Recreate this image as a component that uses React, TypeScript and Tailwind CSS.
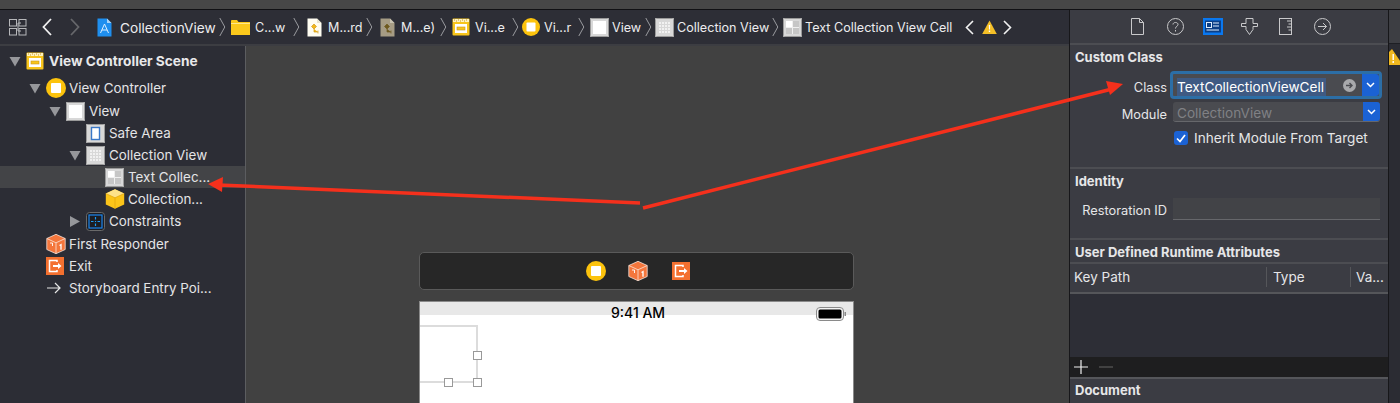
import type { ReactNode } from "react";

const font = "font-['Inter','Liberation_Sans',sans-serif]";

function SceneIcon() {
  return (
    <svg width="18" height="18" viewBox="0 0 18 18" className="shrink-0">
      <rect x="0.5" y="0.5" width="17" height="17" rx="1" fill="#f8c51c" />
      <rect x="1" y="1" width="16" height="3" fill="#fff3c0" />
      <path d="M2 2h1M4 3h1M6 2h1M8 3h1M10 2h1M12 3h1M14 2h1" stroke="#c9971a" strokeWidth="1" />
      <rect x="3" y="6" width="12" height="9" fill="#fff" />
      <rect x="5" y="9" width="8" height="3" fill="#f8c51c" stroke="#c9971a" strokeWidth="0.6" />
    </svg>
  );
}

function VCIcon({ size = 20 }: { size?: number }) {
  return (
    <svg width={size} height={size} viewBox="0 0 20 20" className="shrink-0">
      <circle cx="10" cy="10" r="10" fill="#fcc30d" />
      <rect x="5" y="5" width="10" height="10" rx="1" fill="#fff" />
    </svg>
  );
}

function BoxIcon({ children }: { children?: ReactNode }) {
  return (
    <svg width="19" height="19" viewBox="0 0 19 19" className="shrink-0">
      <rect x="0" y="0" width="19" height="19" rx="1" fill="#d8d8d8" />
      <rect x="0.5" y="0.5" width="18" height="18" rx="1" fill="none" stroke="#9a9a9a" />
      {children}
    </svg>
  );
}

const ViewIcon = () => (
  <BoxIcon>
    <rect x="3" y="3" width="13" height="13" fill="#fff" />
  </BoxIcon>
);

const SafeIcon = () => (
  <BoxIcon>
    <rect x="5.5" y="3.5" width="8" height="12" fill="#fff" stroke="#3a78c8" strokeWidth="1.4" />
  </BoxIcon>
);

const GridIcon = () => (
  <BoxIcon>
    {[4, 7, 10, 13].map((y) =>
      [4, 7, 10, 13].map((x) => <rect key={`${x}-${y}`} x={x} y={y} width="2" height="2" fill="#f1f1f1" />)
    )}
  </BoxIcon>
);

const CellIcon = () => (
  <BoxIcon>
    <rect x="3" y="3" width="13" height="13" fill="#efefef" />
    <rect x="3" y="3" width="6" height="6" fill="#fff" />
    <rect x="10" y="3" width="6" height="6" fill="#c6c6c6" />
    <rect x="3" y="10" width="6" height="6" fill="#c6c6c6" />
    <rect x="10" y="10" width="6" height="6" fill="#c6c6c6" />
  </BoxIcon>
);

function CubeIcon({ size = 20 }: { size?: number }) {
  return (
    <svg width={size} height={size} viewBox="0 0 20 20" className="shrink-0">
      <path d="M10 0.3 19.2 4.5v11L10 19.7.8 15.5v-11z" fill="#f4763c" stroke="#f6e5dc" strokeWidth="0.8" />
      <path d="M.8 4.5 10 8.8l9.2-4.3M10 8.8v10.9" stroke="#fbd9c8" strokeWidth="0.9" fill="none" />
      <path d="M13.5 11.5l1.5-.8v5" stroke="#fff" strokeWidth="1.3" fill="none" />
      <path d="M4 9h2.5v3" stroke="#fff" strokeWidth="0.9" fill="none" />
    </svg>
  );
}

function YellowCube() {
  return (
    <svg width="20" height="20" viewBox="0 0 20 20" className="shrink-0">
      <path d="M10 0.3 19.2 4.5v11L10 19.7.8 15.5v-11z" fill="#fbc41a" />
      <path d="M10 0.3 19.2 4.5 10 8.8.8 4.5z" fill="#fde28a" />
      <path d="M.8 4.5 10 8.8l9.2-4.3M10 8.8v10.9" stroke="#e0a50e" strokeWidth="0.7" fill="none" />
    </svg>
  );
}

function ExitIcon({ size = 18 }: { size?: number }) {
  return (
    <svg width={size} height={size} viewBox="0 0 18 18" className="shrink-0">
      <rect width="18" height="18" fill="#f4702f" />
      <path d="M11 5V3.5H3.5v11H11V13" stroke="#fff" strokeWidth="1.5" fill="none" />
      <path d="M7 8h5V6l3.5 3-3.5 3v-2H7z" fill="#fff" />
    </svg>
  );
}

function ConstraintsIcon() {
  return (
    <svg width="19" height="19" viewBox="0 0 19 19" className="shrink-0">
      <rect x="0.5" y="0.5" width="18" height="18" rx="3" fill="#1c1d22" stroke="#6a6a6a" />
      <rect x="3" y="3" width="13" height="13" fill="none" stroke="#1b86ee" strokeWidth="1.2" />
      <path d="M9.5 5v2.5M9.5 9v1M9.5 11.5V14M5 9.5h2.5M11.5 9.5H14" stroke="#1b9bf5" strokeWidth="1.2" />
    </svg>
  );
}

function Tri({ open = true }: { open?: boolean }) {
  return (
    <svg width="12" height="11" viewBox="0 0 12 11" className="shrink-0 ml-[1px]">
      {open ? <path d="M0.5 1h11L6 10.5z" fill="#96979b" /> : <path d="M1 0l10 5.5L1 11z" fill="#96979b" />}
    </svg>
  );
}

function Row({
  pad,
  label,
  icon,
  tri,
  bold,
  h = "h-[22px]",
  active,
}: {
  pad: string;
  label: string;
  icon: ReactNode;
  tri?: "open" | "closed";
  bold?: boolean;
  h?: string;
  active?: boolean;
}) {
  return (
    <div className={`flex items-center ${h} ${pad} ${active ? "bg-[#434447]" : ""}`}>
      <div className="w-[18px] shrink-0 flex">{tri && <Tri open={tri === "open"} />}</div>
      <div className="w-[20px] shrink-0 flex items-center">{icon}</div>
      <span className={`ml-[3px] whitespace-nowrap ${bold ? "font-bold text-[13.7px] text-[#e8e8ea]" : "text-[#e4e4e6]"}`}>{label}</span>
    </div>
  );
}

function Chevron() {
  return (
    <svg width="7" height="20" viewBox="0 0 7 20" className="shrink-0">
      <path d="M0.8 1 5.8 10 0.8 19" stroke="#9a9b9f" strokeWidth="1" fill="none" />
    </svg>
  );
}

function DocIcon({ dim }: { dim?: boolean }) {
  return (
    <svg width="15" height="19" viewBox="0 0 15 19" className="shrink-0">
      <path d="M0.5 0.5H10L14.5 5v13.5H0.5z" fill={dim ? "#a69c84" : "#fffdf2"} />
      <path d="M10 0.5V5h4.5" fill={dim ? "#c8c2b0" : "#e9e4cf"} />
      <path d="M7 6 9.5 8.5 7 11 4.5 8.5zM7 11v3h4M11 12.5v3" fill={dim ? "#6e5a1f" : "#f2b81e"} stroke={dim ? "#6e5a1f" : "#d09a18"} strokeWidth="0.7" />
    </svg>
  );
}

function Crumb({ ml, icon, label, w, gap }: { ml: string; icon: ReactNode; label: string; w: string; gap: string }) {
  return (
    <>
      <div className={`shrink-0 flex items-center ${ml}`}>{icon}</div>
      <span className={`shrink-0 whitespace-nowrap pt-[2px] text-[#ececee] ${gap} ${w}`}>{label}</span>
    </>
  );
}

function Breadcrumbs() {
  return (
    <div className={`h-[34px] flex items-center bg-[#2d2e36] text-[12.6px] ${font}`}>
      <svg width="18" height="17" viewBox="0 0 18 17" className="ml-[9px] shrink-0" fill="none" stroke="#b6b7ba" strokeWidth="1">
        <rect x="0.5" y="0.5" width="7" height="6.5" />
        <rect x="10" y="0.5" width="7" height="6.5" />
        <rect x="0.5" y="9.5" width="7" height="6.5" />
        <rect x="10" y="9.5" width="7" height="6.5" />
        <path d="M12 4h-3v8h3" />
      </svg>
      <svg width="10" height="18" viewBox="0 0 10 18" className="ml-[15px] shrink-0">
        <path d="M9 1 1.5 9 9 17" stroke="#f2f2f2" strokeWidth="1.8" fill="none" />
      </svg>
      <svg width="10" height="18" viewBox="0 0 10 18" className="ml-[18px] shrink-0">
        <path d="M1 1l7.5 8L1 17" stroke="#66676b" strokeWidth="1.8" fill="none" />
      </svg>
      <svg width="15" height="19" viewBox="0 0 15 19" className="ml-[17px] shrink-0">
        <path d="M0.5 0.5H10L14.5 5v13.5H0.5z" fill="#1f8fef" />
        <path d="M10 0.5V5h4.5z" fill="#a6d4fa" />
        <path d="M7.5 6 11.5 15M7.5 6 3.5 15M5 12h5" stroke="#d9eeff" strokeWidth="1" fill="none" />
      </svg>
      <Crumb ml="" icon={null} label="CollectionView" gap="ml-[8px] text-[13.7px]" w="w-[99px]" />
      <Chevron />
      <Crumb
        ml="ml-[5px]"
        icon={
          <svg width="19" height="15" viewBox="0 0 19 15">
            <path d="M0 2V1.2C0 .5.5 0 1 0h5l1.5 2H19v13H0z" fill="#fbc91c" />
            <rect y="3" width="19" height="1" fill="#ffe88a" />
          </svg>
        }
        label="C...w"
        gap="ml-[5px]"
        w="w-[38px]"
      />
      <Chevron />
      <Crumb ml="ml-[7px]" icon={<DocIcon />} label="M...rd" gap="ml-[6px]" w="w-[38px]" />
      <Chevron />
      <Crumb ml="ml-[7px]" icon={<DocIcon dim />} label="M...e)" gap="ml-[6px]" w="w-[39px]" />
      <Chevron />
      <Crumb ml="ml-[5px]" icon={<SceneIcon />} label="Vi...e" gap="ml-[5px]" w="w-[37px]" />
      <Chevron />
      <Crumb ml="ml-[3px]" icon={<VCIcon size={18} />} label="Vi...r" gap="ml-[4px]" w="w-[34px]" />
      <Chevron />
      <Crumb ml="ml-[5px]" icon={<ViewIcon />} label="View" gap="ml-[3px]" w="w-[33px]" />
      <Chevron />
      <Crumb ml="ml-[3px]" icon={<GridIcon />} label="Collection View" gap="ml-[3px]" w="w-[95px]" />
      <Chevron />
      <Crumb ml="ml-[4px]" icon={<CellIcon />} label="Text Collection View Cell" gap="ml-[3px]" w="w-[160px]" />
      <svg width="9" height="15" viewBox="0 0 9 15" className="shrink-0">
        <path d="M8 1 1.5 7.5 8 14" stroke="#f2f2f2" strokeWidth="1.6" fill="none" />
      </svg>
      <svg width="15" height="14" viewBox="0 0 15 14" className="ml-[8px] shrink-0">
        <path d="M7.5 0.5 14.8 14H.2z" fill="#f4bf27" />
        <path d="M6.8 5h1.4l-.2 4.5H7zM6.8 10.5h1.4V12H6.8z" fill="#fff" />
      </svg>
      <svg width="9" height="15" viewBox="0 0 9 15" className="ml-[6px] shrink-0">
        <path d="M1 1l6.5 6.5L1 14" stroke="#f2f2f2" strokeWidth="1.6" fill="none" />
      </svg>
    </div>
  );
}

function Sidebar() {
  return (
    <div className={`w-[246px] shrink-0 bg-[#2c2d35] border-r border-[#5c5d60] pt-[3px] text-[13.4px] ${font}`}>
      <Row pad="pl-[8px]" h="h-[24px]" label="View Controller Scene" icon={<SceneIcon />} tri="open" bold />
      <div className="h-[4px]" />
      <Row pad="pl-[28px]" label="View Controller" icon={<VCIcon />} tri="open" />
      <div className="h-[1px]" />
      <Row pad="pl-[48px]" label="View" icon={<ViewIcon />} tri="open" />
      <Row pad="pl-[68px]" label="Safe Area" icon={<SafeIcon />} />
      <Row pad="pl-[68px]" label="Collection View" icon={<GridIcon />} tri="open" />
      <Row pad="pl-[87px]" label="Text Collec..." icon={<CellIcon />} active />
      <Row pad="pl-[87px]" label="Collection..." icon={<YellowCube />} />
      <Row pad="pl-[68px]" label="Constraints" icon={<ConstraintsIcon />} tri="closed" />
      <div className="h-[1px]" />
      <Row pad="pl-[28px]" label="First Responder" icon={<CubeIcon />} />
      <Row pad="pl-[28px]" label="Exit" icon={<ExitIcon />} />
      <Row
        pad="pl-[28px]"
        label="Storyboard Entry Poi..."
        icon={
          <svg width="16" height="12" viewBox="0 0 16 12" className="shrink-0">
            <path d="M1 6h13M9 1l5 5-5 5" stroke="#e6e6e6" strokeWidth="1.2" fill="none" />
          </svg>
        }
      />
    </div>
  );
}

function Handle({ className }: { className: string }) {
  return <div className={`absolute w-[9px] h-[9px] bg-white border-[1.5px] border-[#999999] ${className}`} />;
}

function Canvas() {
  return (
    <div className="flex-1 bg-[#414141] pl-[173px] pt-[206px] overflow-hidden">
      <div className="w-[435px] h-[38px] rounded-[5px] bg-[#272727] border border-[#5a5a5a] flex items-center">
        <div className="ml-[166px] flex"><VCIcon /></div>
        <div className="ml-[22px] flex"><CubeIcon /></div>
        <div className="ml-[24px] flex"><ExitIcon /></div>
      </div>
      <div className="mt-[11px] w-[435px] h-[110px] bg-white border border-[#8a8a8a] relative">
        <div className="h-[13px] bg-[#e8e8e8] relative">
          <span className={`absolute left-[191px] top-[2px] text-[14px] leading-[17px] font-medium text-black whitespace-nowrap ${font}`}>9:41 AM</span>
          <svg width="31" height="14" viewBox="0 0 31 14" className="absolute left-[396px] top-[5px]">
            <rect x="0.5" y="0.5" width="27" height="13" rx="3.5" fill="#f4f4f4" stroke="#8a8a8a" />
            <rect x="2.5" y="2.5" width="23" height="9" rx="1.5" fill="#000" />
            <rect x="28.5" y="5" width="1.5" height="4" fill="#8a8a8a" />
          </svg>
        </div>
        <div className="mt-[10px] w-[58px] h-[58px] border-2 border-l-0 border-[#dcdcdc] relative">
          <Handle className="right-[-6px] top-[24px]" />
          <Handle className="left-[24px] bottom-[-6px]" />
          <Handle className="right-[-6px] bottom-[-6px]" />
        </div>
      </div>
    </div>
  );
}

function Dropdown() {
  return (
    <div className="w-[17px] h-full bg-[#1b62d4] flex items-center justify-center shrink-0 rounded-r-[3px]">
      <svg width="9" height="6" viewBox="0 0 9 6">
        <path d="M1 1l3.5 3.5L8 1" stroke="#fff" strokeWidth="1.5" fill="none" />
      </svg>
    </div>
  );
}

function Inspector() {
  return (
    <div className={`w-[320px] shrink-0 bg-[#3b3c43] border-l border-r border-[#17171a] text-[#e6e6e8] text-[13.6px] ${font}`}>
      <div className="h-[35px] border-b-2 border-[#4c4d52] flex items-center">
        <svg width="13" height="17" viewBox="0 0 13 17" className="ml-[61px] shrink-0" fill="none" stroke="#c9c9cb" strokeWidth="1">
          <path d="M.5.5h8l4 4v12H.5zM8.5.5v4h4" />
        </svg>
        <svg width="17" height="17" viewBox="0 0 17 17" className="ml-[23px] shrink-0" fill="none" stroke="#c9c9cb" strokeWidth="1">
          <circle cx="8.5" cy="8.5" r="8" />
          <path d="M6 6.5C6 3.8 11 3.8 11 6.5 11 8.3 8.5 8.3 8.5 10.5M8.5 12v1.5" />
        </svg>
        <svg width="20" height="17" viewBox="0 0 20 17" className="ml-[19px] shrink-0">
          <rect width="20" height="17" fill="#0a78ef" />
          <rect x="2" y="2.5" width="16" height="12" fill="#0b3f86" />
          <rect x="3.5" y="4.5" width="5" height="5" fill="none" stroke="#dfefff" />
          <path d="M10 5h6M10 8h6M3.5 12h12.5" stroke="#dfefff" />
        </svg>
        <svg width="17" height="17" viewBox="0 0 17 17" className="ml-[18px] shrink-0" fill="none" stroke="#c9c9cb" strokeWidth="1">
          <path d="M5 .5h7v5h4.5v3H12v3l-3.5 5-3.5-5v-3H.5v-3H5z" />
        </svg>
        <svg width="13" height="17" viewBox="0 0 13 17" className="ml-[21px] shrink-0" fill="none" stroke="#c9c9cb" strokeWidth="1">
          <rect x=".5" y=".5" width="12" height="16" />
          <path d="M8 3h4M9.5 6H12M8 9h4M9.5 12H12" />
        </svg>
        <svg width="17" height="17" viewBox="0 0 17 17" className="ml-[22px] shrink-0" fill="none" stroke="#c9c9cb" strokeWidth="1">
          <circle cx="8.5" cy="8.5" r="8" />
          <path d="M4 8.5h8.5M9 5l3.5 3.5L9 12" />
        </svg>
      </div>

      <div className="h-[124px] border-b-2 border-[#4c4d52] relative">
        <div className="pl-[5px] pt-[4px] h-[26px] font-bold text-[13px] leading-[16px]">Custom Class</div>
        <div className="flex items-center h-[28px]">
          <span className="w-[97px] text-right text-[12.8px] pt-[6px] shrink-0">Class</span>
          <div className="ml-[3px] w-[212px] h-[28px] border-[3px] border-[#2c6ea6] rounded-[4px] bg-[#4a4b50] flex items-center pl-[4px]">
            <span className="bg-[#3f5a83] h-[18px] mt-[3px] w-[149px] leading-[18px] text-white whitespace-nowrap shrink-0">TextCollectionViewCell</span>
            <div className="ml-[17px] w-[13px] h-[13px] rounded-full bg-[#a8a9ac] flex items-center justify-center shrink-0">
              <svg width="9" height="9" viewBox="0 0 9 9">
                <path d="M1 4.5h6M4.5 2l2.5 2.5L4.5 7" stroke="#4a4b50" strokeWidth="1.4" fill="none" />
              </svg>
            </div>
            <div className="ml-[6px] h-full"><Dropdown /></div>
          </div>
        </div>
        <div className="flex items-center h-[20px] mt-[3px]">
          <span className="w-[97px] text-right text-[12.8px] pt-[6px] shrink-0">Module</span>
          <div className="ml-[6px] w-[207px] h-[20px] bg-[#4a4b50] border-b border-[#66676b] flex items-center pl-[4px] rounded-[3px]">
            <span className="flex-1 pt-[3px] text-[#808185] whitespace-nowrap">CollectionView</span>
            <Dropdown />
          </div>
        </div>
        <div className="flex items-center mt-[6px] ml-[104px]">
          <div className="w-[14px] h-[14px] rounded-[3px] bg-[#1b62d4] flex items-center justify-center shrink-0">
            <svg width="10" height="9" viewBox="0 0 10 9">
              <path d="M1 4.5 4 7.5 9 1" stroke="#fff" strokeWidth="1.7" fill="none" />
            </svg>
          </div>
          <span className="ml-[6px] whitespace-nowrap">Inherit Module From Target</span>
        </div>
      </div>

      <div className="h-[71px] border-b-2 border-[#4c4d52]">
        <div className="pl-[5px] pt-[4px] h-[29px] font-bold text-[13px] leading-[16px]">Identity</div>
        <div className="flex items-center h-[22px]">
          <span className="w-[97px] text-right text-[12.8px] pt-[4px] shrink-0 whitespace-nowrap">Restoration ID</span>
          <div className="ml-[6px] w-[207px] h-[22px] bg-[#424347] border-b border-[#66676b]" />
        </div>
      </div>

      <div className="h-[24px] pl-[5px] pt-[4px] font-bold text-[13px] leading-[16px] border-b-2 border-[#4c4d52]">User Defined Runtime Attributes</div>
      <div className="h-[30px] flex items-center border-b-2 border-[#55565a] text-[13.5px] pb-[2px]">
        <span className="w-[197px] pl-[4px] border-r border-[#55565a] leading-[20px] shrink-0">Key Path</span>
        <span className="w-[84px] pl-[6px] border-r border-[#55565a] leading-[20px] shrink-0">Type</span>
        <span className="pl-[5px] whitespace-nowrap">Va...</span>
      </div>
      <div className="h-[63px] bg-[#2d2e36]" />
      <div className="h-[22px] bg-[#1e1e1f] flex items-center pl-[4px] border-b-2 border-[#55565a]">
        <svg width="14" height="14" viewBox="0 0 14 14">
          <path d="M7 0v14M0 7h14" stroke="#f0f0f0" strokeWidth="1.2" />
        </svg>
        <svg width="14" height="2" viewBox="0 0 14 2" className="ml-[11px]">
          <path d="M0 1h14" stroke="#5a5a5a" strokeWidth="1.2" />
        </svg>
      </div>
      <div className="pl-[5px] pt-[3px] font-bold text-[13px] leading-[16px]">Document</div>
    </div>
  );
}

export default function App() {
  return (
    <div className="w-[1400px] h-[403px] overflow-hidden relative bg-[#2c2d35] flex flex-col">
      <div className="h-[10px] shrink-0 bg-[#474747] border-b border-[#111114]" />
      <div className="flex flex-1 min-h-0">
        <div className="w-[1069px] shrink-0 flex flex-col">
          <div className="shrink-0 border-b-2 border-[#3c3d42]">
            <Breadcrumbs />
          </div>
          <div className="flex flex-1 min-h-0">
            <Sidebar />
            <Canvas />
          </div>
        </div>
        <Inspector />
        <div className="flex-1 relative bg-[#2b2c33]">
          <div className="h-[34px] bg-[#3d3e43] border-b border-[#1e1f24]" />
          <svg width="14" height="16" viewBox="0 0 14 16" className="absolute left-[0px] top-[39px]">
            <path d="M3 0 14 16H0V3z" fill="#f0b81f" />
            <path d="M3.5 5h1.4v6H3.5zM3.5 12h1.4v2H3.5z" fill="#fff" />
          </svg>
        </div>
      </div>
      {/* red annotation arrows drawn over the screenshot */}
      <svg width="1400" height="403" viewBox="0 0 1400 403" className="absolute inset-0 pointer-events-none">
        <path d="M640 203 218 185" stroke="#f5301c" strokeWidth="3.5" fill="none" />
        <path d="M208 184 223 177 222 192z" fill="#f5301c" />
        <path d="M643 208 1112 89" stroke="#f5301c" strokeWidth="3.5" fill="none" />
        <path d="M1123 84 1106 81 1110 95z" fill="#f5301c" />
      </svg>
    </div>
  );
}
